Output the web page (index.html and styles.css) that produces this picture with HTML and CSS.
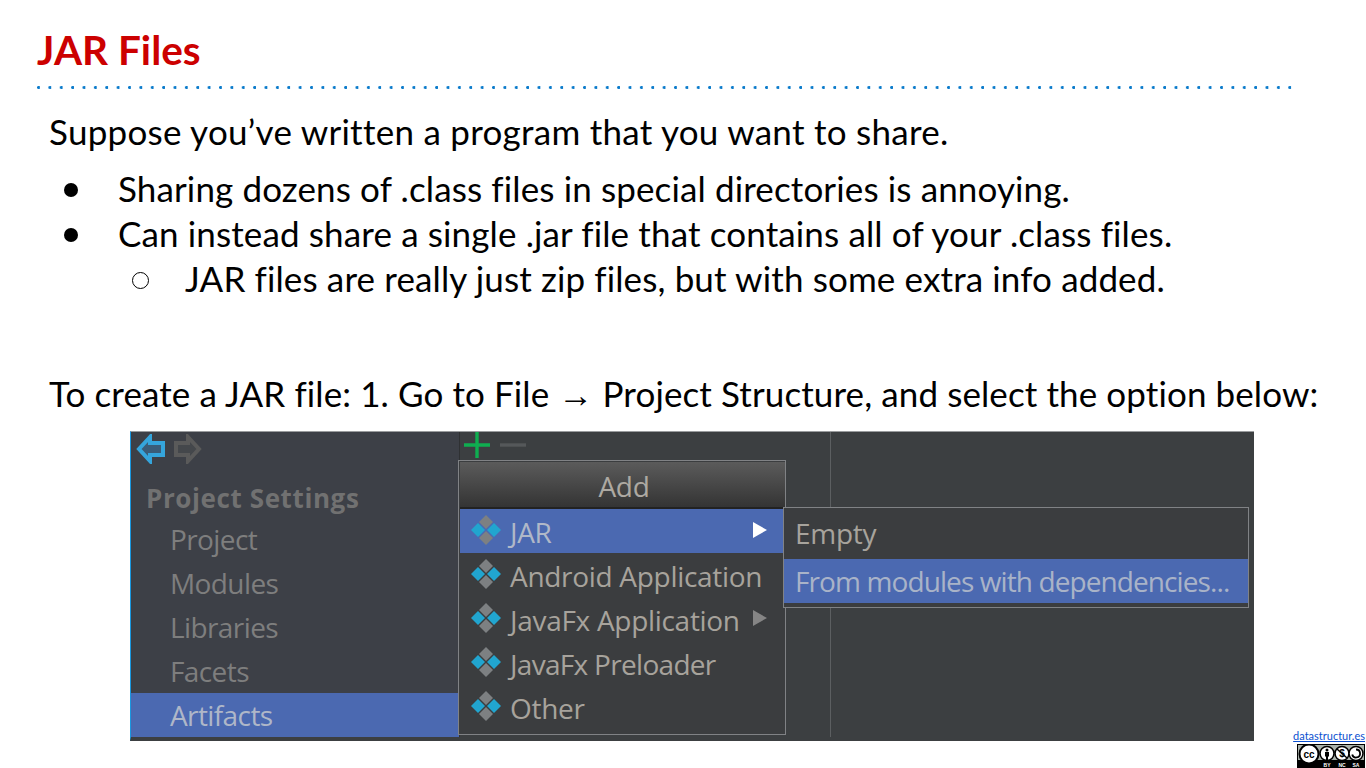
FILE: index.html
```html
<!DOCTYPE html>
<html lang="en">
<head>
<meta charset="utf-8">
<title>JAR Files</title>
<link rel="stylesheet" href="styles.css">
</head>
<body>
<svg class="defs" width="0" height="0" aria-hidden="true">
  <symbol id="dia" viewBox="0 0 30 30">
    <path class="d-g" d="M15 0l7 7-7 7-7-7z"/>
    <path class="d-g" d="M15 16l7 7-7 7-7-7z"/>
    <path class="d-b" d="M7 8l7 7-7 7-7-7z"/>
    <path class="d-b" d="M23 8l7 7-7 7-7-7z"/>
  </symbol>
</svg>
<main class="slide">
  <h1 class="title">JAR Files</h1>
  <div class="dots"></div>
  <p class="lead">Suppose you’ve written a program that you want to share.</p>
  <ul class="l1">
    <li>Sharing dozens of .class files in special directories is annoying.</li>
    <li>Can instead share a single .jar file that contains all of your .class files.
      <ul class="l2">
        <li>JAR files are really just zip files, but with some extra info added.</li>
      </ul>
    </li>
  </ul>
  <p class="lead lead2">To create a JAR file: 1. Go to File <span class="arrow">→</span> Project Structure, and select the option below:</p>
  <section class="ide">
    <aside class="side">
      <div class="nav">
        <svg width="30" height="30" viewBox="0 0 30 30"><path d="M14 3L3 15l11 12v-6h13V9H14z" fill="#3a5c78" stroke="#35a5dc" stroke-width="4"/></svg>
        <svg width="30" height="30" viewBox="0 0 30 30"><path d="M15 3l11 12-11 12v-6H3V9h12z" fill="#44474b" stroke="#5a5a5a" stroke-width="4"/></svg>
      </div>
      <div class="side-h">Project Settings</div>
      <div class="side-i">Project</div>
      <div class="side-i">Modules</div>
      <div class="side-i">Libraries</div>
      <div class="side-i">Facets</div>
      <div class="side-i side-sel">Artifacts</div>
    </aside>
    <div class="mid">
      <div class="tools">
        <svg width="28" height="28" viewBox="0 0 28 28"><path d="M14 1v26M1 14h26" stroke="#0fae50" stroke-width="3.4" fill="none"/></svg>
        <svg width="28" height="28" viewBox="0 0 28 28"><path d="M1 14h26" stroke="#55585a" stroke-width="3.4" fill="none"/></svg>
      </div>
    </div>
    <div class="rest"></div>
    <div class="menu">
      <div class="menu-h">Add</div>
      <div class="mi mi-sel"><svg class="dia dia-sel"><use href="#dia"/></svg><span>JAR</span><i class="arr arr-w"></i></div>
      <div class="mi"><svg class="dia"><use href="#dia"/></svg><span>Android Application</span></div>
      <div class="mi"><svg class="dia"><use href="#dia"/></svg><span>JavaFx Application</span><i class="arr"></i></div>
      <div class="mi"><svg class="dia"><use href="#dia"/></svg><span class="tight">JavaFx Preloader</span></div>
      <div class="mi"><svg class="dia"><use href="#dia"/></svg><span>Other</span></div>
    </div>
    <div class="sub">
      <div class="si">Empty</div>
      <div class="si si-sel">From modules with dependencies...</div>
    </div>
  </section>
</main>
<footer class="lic">
  <a class="lic-a" href="#">datastructur.es</a>
  <svg class="cc" width="68" height="24" viewBox="0 0 68 24">
    <rect width="68" height="24" fill="#000"/>
    <rect x="1" y="1" width="66" height="15" fill="#aab2ab"/>
    <circle cx="12" cy="10" r="9.5" fill="#fff" stroke="#000" stroke-width="2"/>
    <text class="cc-t" x="12" y="13.5">cc</text>
    <circle cx="30" cy="9.5" r="7" fill="#fff" stroke="#000" stroke-width="1.6"/>
    <circle cx="30" cy="6" r="1.5"/><path d="M28 8h4v4.5h-1V16h-2v-3.500h-1z"/>
    <circle cx="45" cy="9.500" r="7" fill="#fff" stroke="#000" stroke-width="1.6"/>
    <text class="cc-t" x="45" y="13">$</text><path d="M40 5l10 9" stroke="#000" stroke-width="1.400"/>
    <circle cx="59" cy="9.500" r="7" fill="#fff" stroke="#000" stroke-width="1.6"/>
    <path d="M59 5.500a4 4 0 1 1-3.800 5" fill="none" stroke="#000" stroke-width="1.800"/>
    <text class="cc-s" x="30" y="22.500">BY</text><text class="cc-s" x="45" y="22.500">NC</text><text class="cc-s" x="59" y="22.500">SA</text>
  </svg>
</footer>
</body>
</html>
```

FILE: styles.css
```css
* { box-sizing: border-box; }
html, body { margin: 0; height: 768px; overflow: hidden; background: #fff; }
body { font-family: "Lato", "Open Sans", "Liberation Sans", sans-serif; color: #000; position: relative; font-variant-ligatures: none; }
.defs { position: absolute; }
.slide { padding: 26px 0 0 37px; width: 1366px; }
.title { margin: 0; font-size: 40.5px; line-height: 48px; font-weight: 700; color: #cc0000; height: 48px; }
.dots { width: 1256px; height: 3px; margin-top: 12px; background: radial-gradient(circle at 1.5px 1.5px, #0b7bcb 1.3px, transparent 1.6px) 0 0 / 11.38px 3px repeat-x; }
.lead { margin: 20px 0 0 12px; font-size: 35px; line-height: 44px; white-space: nowrap; height: 44px; letter-spacing: .27px; }
.l1, .l2 { list-style: none; margin: 0; padding: 0; font-size: 35px; line-height: 45px; white-space: nowrap; letter-spacing: .13px; }
.l1 { margin-top: 13px; padding-left: 81px; }
.l2 { padding-left: 67px; }
.l1 > li, .l2 > li { position: relative; }
.l1 > li::before { content: ""; position: absolute; left: -54px; top: 17px; width: 14px; height: 14px; border-radius: 50%; background: #000; }
.l2 > li::before { content: ""; position: absolute; left: -53px; top: 16px; width: 15px; height: 15px; border-radius: 50%; border: 1.5px solid #000; }
.lead2 { margin-top: 70px; letter-spacing: .1px; }
.arrow { font-family: "Liberation Sans", sans-serif; }
.ide { margin: 16px 0 0 93px; width: 1124px; height: 310px; display: grid; grid-template-columns: 328px 372px 1fr; background: #3c3f41; border-top: 1px solid #9a9c9e; border-bottom: 4px solid #3c3f41; border-left: 1px solid #1a98e0; position: relative; color: #8b8b8b; font-size: 28px; letter-spacing: -.3px; font-family: "Open Sans", sans-serif; }
.side { background: #3d4047; }
.nav { display: flex; gap: 7px; padding: 2px 0 0 5px; height: 36px; }
.side-h { font-weight: 700; font-size: 26px; color: #717171; padding-left: 15px; height: 38px; line-height: 38px; margin-top: 11px; letter-spacing: .6px; }
.side-i { height: 44px; line-height: 44px; padding-left: 39px; color: #7e7e7e; letter-spacing: -.6px; }
.side-sel { background: #4b69b1; color: #afb7c8; }
.mid { border-left: 1px solid #2f3133; border-right: 1px solid #5c5f61; }
.tools { display: flex; gap: 8px; padding: 0 0 0 3px; margin-top: -1px; }
.menu { position: absolute; left: 327px; top: 28px; width: 328px; height: 275px; border: 1.5px solid #808285; background: #3b3d3f; padding: 1px 0 0 1px; }
.menu-h { height: 47px; line-height: 49px; padding-left: 3px; text-align: center; background: linear-gradient(#5b5b5b, #343434); border-bottom: 2px solid #222; color: #ada9a2; }
.mi { height: 44px; line-height: 44px; display: flex; align-items: center; position: relative; color: #a7a39c; white-space: nowrap; padding-left: 11px; }
.mi span { margin-left: 9px; padding-top: 1px; }
.mi .tight { letter-spacing: -.7px; }
.mi-sel { background: #4b69b1; color: #b0b8c8; }
.dia { width: 30px; height: 30px; margin-top: -2px; }
.d-g { fill: #7d8082; }
.d-b { fill: #21a5cf; }
.dia-sel .d-g { fill: #8c9cb8; }
.dia-sel .d-b { fill: #29abe0; }
.arr { position: absolute; left: 293px; top: 13px; border-left: 14px solid #858585; border-top: 8px solid transparent; border-bottom: 8px solid transparent; }
.arr-w { border-left-color: #fff; }
.sub { position: absolute; left: 652px; top: 75px; width: 466px; height: 101px; border: 1.5px solid #808285; background: #3b3d3f; padding-top: 3px; color: #a7a39c; }
.si { height: 44px; line-height: 44px; padding-left: 11px; white-space: nowrap; }
.si-sel { margin-top: 4px; background: #4b69b1; color: #a9b3c8; letter-spacing: -.9px; }
.lic { position: absolute; right: 1px; top: 729px; width: 80px; display: flex; flex-direction: column; align-items: flex-end; }
.lic-a { font-size: 11px; line-height: 14px; margin-right: 0; color: #0b50d0; text-decoration: underline; font-family: "Lato", sans-serif; }
.cc { display: block; margin-top: 1px; }
.cc-t { font: 700 10px "Liberation Sans", sans-serif; text-anchor: middle; }
.cc-s { font: 700 5px "Liberation Sans", sans-serif; text-anchor: middle; fill: #fff; }
```
